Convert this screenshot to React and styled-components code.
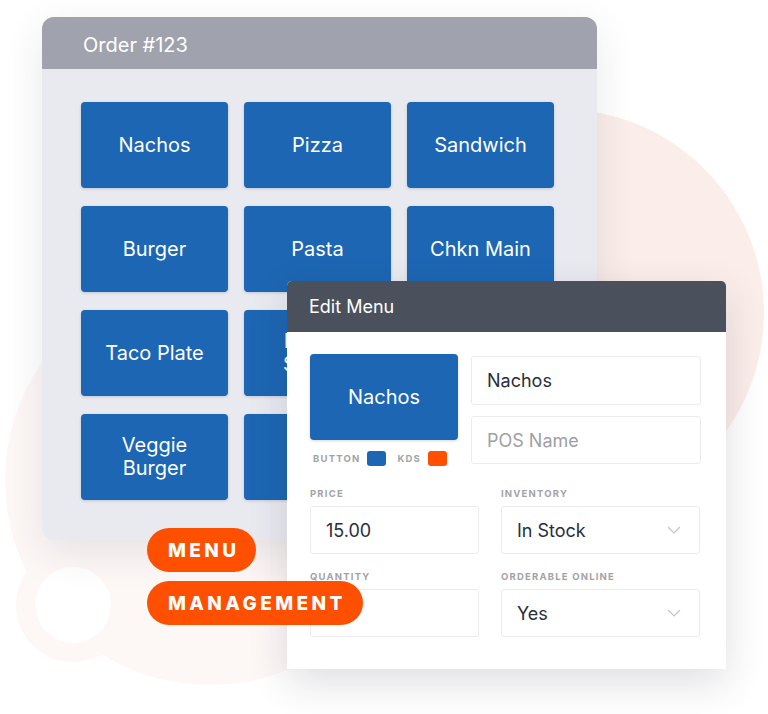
import React from "react";
import styled, {createGlobalStyle} from "styled-components";

const GlobalStyle = createGlobalStyle`
  body {
    margin: 0;
    background: #fff;
    font-family: Inter, "Noto Sans", "Liberation Sans", sans-serif;
  }
`;

const Stage = styled.div`
  position: relative;
  width: 768px;
  height: 714px;
  overflow: hidden;
  padding: 17px 0 0 42px;
  box-sizing: border-box;
`;

const Blob = styled.div`
  position: absolute;
  border-radius: 50%;
  left: ${(p) => p.$x - p.$r}px;
  top: ${(p) => p.$y - p.$r}px;
  width: ${(p) => p.$r * 2}px;
  height: ${(p) => p.$r * 2}px;
  background: ${(p) => p.$color};
`;

const OrderPanel = styled.div`
  position: relative;
  z-index: 1;
  width: 555px;
  height: 523px;
  border-radius: 12px;
  overflow: hidden;
  background: #e9eaf0;
  box-shadow: 0 12px 40px rgba(40, 40, 60, 0.1);
`;

const OrderHeader = styled.div`
  height: 52px;
  box-sizing: border-box;
  background: #a0a2ae;
  color: #fff;
  font-size: 20px;
  display: flex;
  align-items: center;
  padding: 3px 0 0 41px;
`;

const ButtonGrid = styled.div`
  display: grid;
  grid-template-columns: repeat(3, 147px);
  grid-auto-rows: 86px;
  gap: 18px 16px;
  padding: 33px 0 0 39px;
`;

const MenuButton = styled.div`
  background: #1d66b3;
  border-radius: 4px;
  box-shadow: 0 1px 3px rgba(20, 40, 80, 0.18);
  color: #fff;
  font-size: 20px;
  line-height: 23px;
  display: flex;
  align-items: center;
  justify-content: center;
  text-align: center;
  white-space: pre-line;
`;

const EditPanel = styled.div`
  position: absolute;
  z-index: 2;
  left: 287px;
  top: 281px;
  width: 439px;
  height: 388px;
  background: #fff;
  border-radius: 5px 5px 0 0;
  overflow: hidden;
  box-shadow: 0 14px 40px rgba(30, 30, 50, 0.14);
`;

const EditHeader = styled.div`
  height: 51px;
  background: #4b505d;
  color: #fff;
  font-size: 18px;
  display: flex;
  align-items: center;
  padding-left: 22px;
`;

const EditBody = styled.div`
  padding: 22px 25px 0 23px;
`;

const TopRow = styled.div`
  display: flex;
  gap: 13px;
`;

const PreviewCol = styled.div`
  width: 148px;
`;

const Preview = styled(MenuButton)`
  height: 86px;
`;

const SwatchRow = styled.div`
  display: flex;
  align-items: center;
  margin-top: 11px;
  padding-left: 3px;
`;

const Swatch = styled.span`
  display: inline-block;
  width: 24px;
  height: 15px;
  border-radius: 3px;
  background: ${(p) => p.$color};
  margin: 0 11px 0 7px;
`;

const Label = styled.div`
  font-size: 9.5px;
  line-height: 12px;
  font-weight: 700;
  letter-spacing: 1.2px;
  color: #a3a3a6;
  text-transform: uppercase;
`;

const NameCol = styled.div`
  display: flex;
  flex-direction: column;
  gap: 11px;
  width: 230px;
  padding-top: 2px;
`;

const Field = styled.div`
  height: ${(p) => p.$h || 48}px;
  box-sizing: border-box;
  border: 1px solid #ececee;
  border-radius: 3px;
  display: flex;
  align-items: center;
  justify-content: space-between;
  padding: 0 18px 0 15px;
  font-size: 18px;
  color: ${(p) => (p.$placeholder ? "#a0a0a4" : "#2a2e3b")};
`;

const FieldGrid = styled.div`
  display: grid;
  grid-template-columns: 169px 199px;
  column-gap: 22px;
  row-gap: 17px;
  margin-top: 22px;
`;

const FieldGroup = styled.div`
  display: flex;
  flex-direction: column;
  gap: 6px;
`;

const Chevron = () => (
  <svg width="14" height="8" viewBox="0 0 14 8">
    <polyline points="1,1 7,7 13,1" fill="none" stroke="#c4c4c8" strokeWidth="1.2" />
  </svg>
);

const Badges = styled.div`
  position: absolute;
  z-index: 3;
  left: 147px;
  top: 528px;
  display: flex;
  flex-direction: column;
  align-items: flex-start;
  gap: 9px;
`;

const Badge = styled.div`
  height: 44px;
  box-sizing: border-box;
  padding: 0 17px 0 21px;
  border-radius: 22px;
  background: #ff4f00;
  color: #fff;
  font-size: 19px;
  font-weight: 800;
  letter-spacing: 3.4px;
  display: flex;
  align-items: center;
`;

const items = [
  "Nachos", "Pizza", "Sandwich",
  "Burger", "Pasta", "Chkn Main",
  "Taco Plate", "Brunch\nSpecial", "Wings",
  "Veggie\nBurger", "Salad", "Soup",
];

export default function App() {
  return (
    <>
      <GlobalStyle />
      <Stage>
        <Blob $x={560} $y={313} $r={204} $color="#fbede9" />
        <Blob $x={210} $y={480} $r={205} $color="#fdf8f6" />
        <Blob $x={73} $y={605} $r={57} $color="#fdf8f6" />
        <Blob $x={73} $y={605} $r={38} $color="#ffffff" />

        <OrderPanel>
          <OrderHeader>Order #123</OrderHeader>
          <ButtonGrid>
            {items.map((name) => (
              <MenuButton key={name}>{name}</MenuButton>
            ))}
          </ButtonGrid>
        </OrderPanel>

        <EditPanel>
          <EditHeader>Edit Menu</EditHeader>
          <EditBody>
            <TopRow>
              <PreviewCol>
                <Preview>Nachos</Preview>
                <SwatchRow>
                  <Label>Button</Label>
                  <Swatch $color="#1d66b3" />
                  <Label>KDS</Label>
                  <Swatch $color="#ff4f00" />
                </SwatchRow>
              </PreviewCol>
              <NameCol>
                <Field $h={49}>Nachos</Field>
                <Field $placeholder>POS Name</Field>
              </NameCol>
            </TopRow>
            <FieldGrid>
              <FieldGroup>
                <Label>Price</Label>
                <Field>15.00</Field>
              </FieldGroup>
              <FieldGroup>
                <Label>Inventory</Label>
                <Field>
                  In Stock
                  <Chevron />
                </Field>
              </FieldGroup>
              <FieldGroup>
                <Label>Quantity</Label>
                <Field />
              </FieldGroup>
              <FieldGroup>
                <Label>Orderable Online</Label>
                <Field>
                  Yes
                  <Chevron />
                </Field>
              </FieldGroup>
            </FieldGrid>
          </EditBody>
        </EditPanel>

        <Badges>
          <Badge>MENU</Badge>
          <Badge>MANAGEMENT</Badge>
        </Badges>
      </Stage>
    </>
  );
}
